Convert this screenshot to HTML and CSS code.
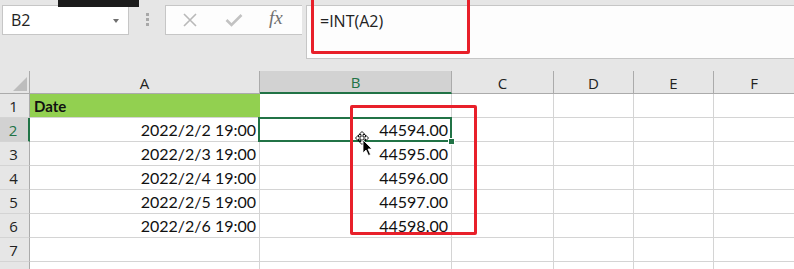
FILE: index.html
```html
<!DOCTYPE html>
<html>
<head>
<meta charset="utf-8">
<link rel="stylesheet" href="styles.css">
</head>
<body>
<div class="app">
  <div class="topbar">
    <div class="namebox"><span class="name">B2</span><span class="caret"></span></div>
    <div class="dots"><i></i><i></i><i></i></div>
    <div class="fnbox">
      <svg class="ic-x" width="16" height="16" viewBox="0 0 16 16"><path d="M2 2 L14 14 M14 2 L2 14" stroke="#b9b9b9" stroke-width="1.6" fill="none"/></svg>
      <svg class="ic-ok" width="18" height="16" viewBox="0 0 18 16"><path d="M1.5 8 L6.5 13 L16.5 3" stroke="#c2c2c2" stroke-width="2.6" fill="none"/></svg>
      <span class="fx">fx</span>
    </div>
    <div class="formula">=INT(A2)</div>
    <div class="blackbar"></div>
    <div class="redbox top"></div>
  </div>
  <div class="grid">
    <div class="corner"><svg width="14" height="14" viewBox="0 0 14 14"><path d="M14 0 L14 14 L0 14 Z" fill="#bdbdbd"/></svg></div>
    <div class="ch">A</div>
    <div class="ch sel">B</div>
    <div class="ch">C</div>
    <div class="ch">D</div>
    <div class="ch">E</div>
    <div class="ch last">F</div>

    <div class="rh">1</div>
    <div class="c green">Date</div>
    <div class="c"></div><div class="c"></div><div class="c"></div><div class="c"></div><div class="c last"></div>

    <div class="rh sel">2</div>
    <div class="c r">2022/2/2 19:00</div>
    <div class="c r active">44594.00<span class="handle"></span></div>
    <div class="c"></div><div class="c"></div><div class="c"></div><div class="c last"></div>

    <div class="rh">3</div>
    <div class="c r">2022/2/3 19:00</div>
    <div class="c r">44595.00</div>
    <div class="c"></div><div class="c"></div><div class="c"></div><div class="c last"></div>

    <div class="rh">4</div>
    <div class="c r">2022/2/4 19:00</div>
    <div class="c r">44596.00</div>
    <div class="c"></div><div class="c"></div><div class="c"></div><div class="c last"></div>

    <div class="rh">5</div>
    <div class="c r">2022/2/5 19:00</div>
    <div class="c r">44597.00</div>
    <div class="c"></div><div class="c"></div><div class="c"></div><div class="c last"></div>

    <div class="rh">6</div>
    <div class="c r">2022/2/6 19:00</div>
    <div class="c r">44598.00</div>
    <div class="c"></div><div class="c"></div><div class="c"></div><div class="c last"></div>

    <div class="rh">7</div>
    <div class="c"></div><div class="c"></div><div class="c"></div><div class="c"></div><div class="c"></div><div class="c last"></div>

    <div class="rh"></div>
    <div class="c"></div><div class="c"></div><div class="c"></div><div class="c"></div><div class="c"></div><div class="c last"></div>

    <div class="redbox cells"></div>
    <svg class="cursor" width="22" height="26" viewBox="0 0 22 26">
      <g stroke="#000" stroke-width="0.9" fill="#fff">
        <path d="M7 0.5 L10 3.5 L8 3.5 L8 6 L10.5 6 L10.5 4 L13.5 7 L10.5 10 L10.5 8 L8 8 L8 10.5 L10 10.5 L7 13.5 L4 10.5 L6 10.5 L6 8 L3.5 8 L3.5 10 L0.5 7 L3.5 4 L3.5 6 L6 6 L6 3.5 L4 3.5 Z"/>
      </g>
      <path d="M8 9 L8 22 L11 19 L13.5 24.5 L15.5 23.5 L13 18 L17 18 Z" fill="#000" stroke="#fff" stroke-width="0.8"/>
    </svg>
  </div>
</div>
</body>
</html>
```

FILE: styles.css
```css
html, body {
  margin: 0;
  padding: 0;
  background: #e6e6e6;
  overflow: hidden;
}
.app {
  width: 794px;
  height: 269px;
  position: relative;
  overflow: hidden;
}
.topbar {
  position: relative;
  height: 71px;
  display: flex;
  align-items: flex-start;
  padding-top: 5px;
  box-sizing: border-box;
}
.namebox {
  margin-left: 2px;
  width: 127px;
  height: 30px;
  box-sizing: border-box;
  border: 1px solid #c6c6c6;
  background: #fff;
  display: flex;
  align-items: center;
  justify-content: space-between;
  padding: 0 9px 0 8px;
  font-family: "Open Sans", "Noto Sans", sans-serif;
  font-size: 16px;
  color: #222;
}
.caret {
  width: 0;
  height: 0;
  border-left: 3.5px solid transparent;
  border-right: 3.5px solid transparent;
  border-top: 4px solid #6f6f6f;
  margin-top: 1px;
}
.dots {
  margin-left: 17px;
  margin-top: 8px;
  display: flex;
  flex-direction: column;
  gap: 2px;
}
.dots i {
  display: block;
  width: 3px;
  height: 3px;
  background: #a8a8a8;
}
.fnbox {
  margin-left: 16px;
  width: 137px;
  height: 30px;
  box-sizing: border-box;
  border: 1px solid #c6c6c6;
  border-right: none;
  background: #fdfdfd;
  display: flex;
  align-items: center;
  padding-left: 16px;
}
.ic-x { margin-right: 27px; }
.ic-ok { margin-right: 26px; }
.fx {
  font-family: "Liberation Serif", "DejaVu Serif", serif;
  font-style: italic;
  font-size: 19px;
  color: #707070;
  margin-top: -4px;
}
.formula {
  margin-left: 4px;
  flex: 1;
  height: 54px;
  box-sizing: border-box;
  border: 1px solid #c6c6c6;
  border-right: none;
  background: #fdfdfd;
  font-family: "Open Sans", "Noto Sans", sans-serif;
  font-size: 16px;
  color: #222;
  padding: 5px 0 0 13px;
  line-height: 20px;
}
.blackbar {
  position: absolute;
  left: 58px;
  top: 0;
  width: 81px;
  height: 7px;
  background: #1b1b1b;
}
.redbox {
  position: absolute;
  border: 3px solid #e8202a;
  border-radius: 2px;
  box-sizing: border-box;
}
.redbox.top {
  left: 311px;
  top: -3px;
  width: 159px;
  height: 57px;
}
.grid {
  position: relative;
  display: grid;
  grid-template-columns: 30px 230px 192px 102px 80px 80px 80px;
  grid-template-rows: 23px repeat(8, 24px);
  background: #fff;
  font-family: "Lato", "Open Sans", sans-serif;
  font-size: 16px;
  color: #111;
}
.corner {
  background: #e6e6e6;
  border-right: 1px solid #ababab;
  border-bottom: 1px solid #ababab;
  box-sizing: border-box;
  display: flex;
  align-items: flex-end;
  justify-content: flex-end;
  padding: 0 2px 2px 0;
}
.ch {
  background: #e6e6e6;
  border-right: 1px solid #ababab;
  border-bottom: 1px solid #ababab;
  box-sizing: border-box;
  display: flex;
  align-items: center;
  justify-content: center;
  font-family: "Open Sans", "Noto Sans", sans-serif;
  font-size: 15px;
  color: #222;
  padding-top: 1px;
}
.ch.sel {
  background: #d2d2d2;
  color: #217346;
  border-bottom: 2px solid #217346;
}
.ch.last { border-right: none; }
.rh {
  background: #e6e6e6;
  border-right: 1px solid #ababab;
  border-bottom: 1px solid #d4d4d4;
  box-sizing: border-box;
  display: flex;
  align-items: center;
  justify-content: center;
  font-family: "Open Sans", "Noto Sans", sans-serif;
  font-size: 15px;
  color: #222;
  padding-right: 2px;
}
.rh.sel {
  background: #d2d2d2;
  color: #217346;
  border-right: 2px solid #217346;
}
.c {
  position: relative;
  border-right: 1px solid #d4d4d4;
  border-bottom: 1px solid #d4d4d4;
  box-sizing: border-box;
  display: flex;
  align-items: flex-end;
  padding: 0 3px 2px 4px;
  white-space: nowrap;
}
.c.last { border-right: none; }
.c.r { justify-content: flex-end; }
.c.green {
  background: #92d050;
  font-weight: bold;
  font-family: "Lato", sans-serif;
  font-size: 15px;
  border-right-color: #92d050;
}
.c.active::before {
  content: "";
  position: absolute;
  left: -2px;
  top: -1px;
  right: -1px;
  bottom: -1px;
  border: 2px solid #217346;
  pointer-events: none;
}
.handle {
  position: absolute;
  right: -4px;
  bottom: -4px;
  width: 5px;
  height: 5px;
  background: #217346;
  border: 1px solid #fff;
  z-index: 2;
}
.redbox.cells {
  left: 350px;
  top: 34px;
  width: 127px;
  height: 130px;
}
.cursor {
  position: absolute;
  left: 355px;
  top: 60px;
}
```
